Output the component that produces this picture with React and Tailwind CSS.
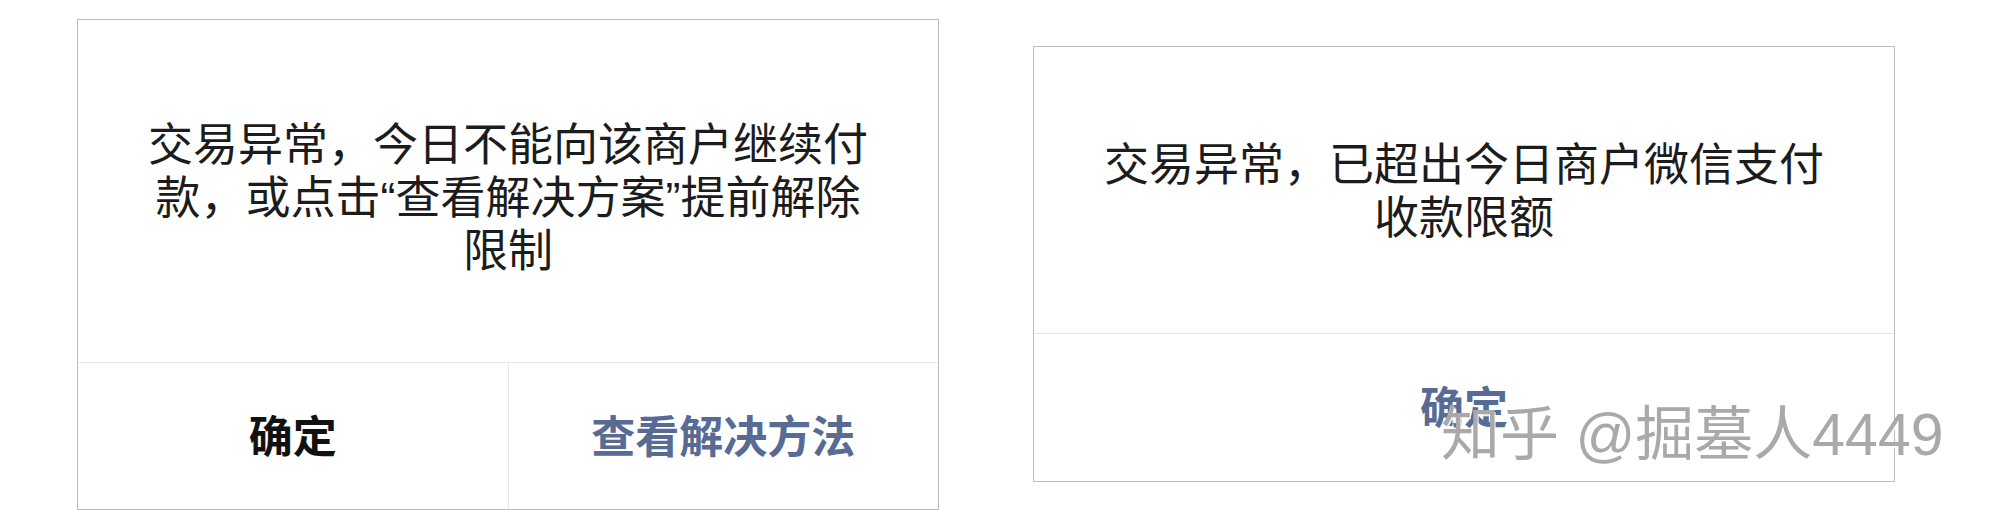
const font = { fontFamily: '"Liberation Sans", "Noto Sans CJK SC", sans-serif' };

function Dialog({ lines, bodyHeight, footHeight, children, className, bodyClass }) {
  return (
    <div className={`flex w-[862px] flex-col border border-[#bdbdbd] bg-white ${className}`}>
      <div
        className={`flex flex-col items-center justify-center px-[64px] text-center text-[45px] leading-[53px] text-[#1c1c1c] ${bodyClass}`}
        style={{ height: bodyHeight }}
      >
        {lines.map((l) => (
          <p key={l}>{l}</p>
        ))}
      </div>
      <div className="flex border-t border-[#e6e6e6]" style={{ height: footHeight }}>
        {children}
      </div>
    </div>
  );
}

export default function App() {
  return (
    <div className="flex h-[529px] w-[2000px] items-start gap-[94px] bg-white pl-[77px]" style={font}>
      <Dialog
        className="mt-[19px]"
        bodyClass="pt-[14px]"
        bodyHeight={342}
        footHeight={147}
        lines={['交易异常，今日不能向该商户继续付', '款，或点击“查看解决方案”提前解除', '限制']}
      >
        <button className="flex flex-1 items-center justify-center pt-[3px] text-[44px] font-bold text-[#111]">
          确定
        </button>
        <button className="flex flex-1 items-center justify-center border-l border-[#e6e6e6] pt-[3px] text-[44px] font-bold text-[#576b95]">
          查看解决方法
        </button>
      </Dialog>

      <div className="relative mt-[46px]">
        <Dialog
          bodyClass="pt-[4px]"
          bodyHeight={286}
          footHeight={148}
          lines={['交易异常，已超出今日商户微信支付', '收款限额']}
        >
          <button className="flex flex-1 items-center justify-center pt-[2px] text-[44px] font-bold text-[#576b95]">
            确定
          </button>
        </Dialog>
        {/* site watermark stamped over the corner */}
        <div className="pointer-events-none absolute left-[408px] top-[360px] whitespace-nowrap text-[59px] leading-none text-[#a9a9a9] [text-shadow:1px_2px_0_rgba(255,255,255,0.9)]">
          知乎 @掘墓人4449
        </div>
      </div>
    </div>
  );
}
